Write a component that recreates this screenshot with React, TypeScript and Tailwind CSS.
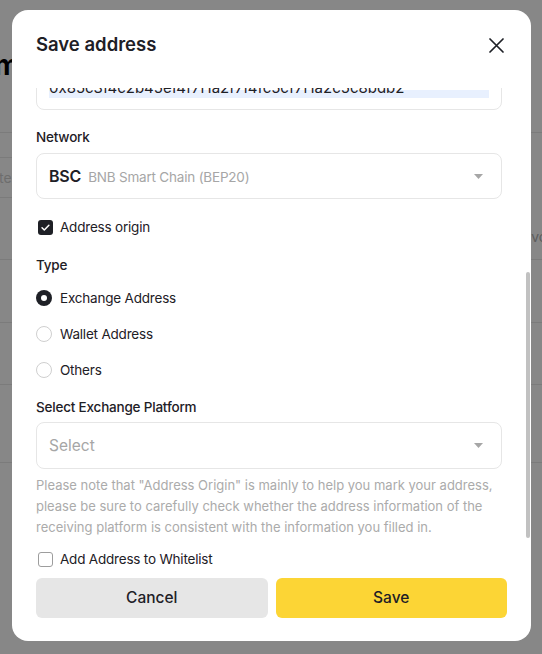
import { useLayoutEffect, useRef } from "react";

function CheckBox({ checked }: { checked: boolean }) {
  if (checked) {
    return (
      <span className="ml-[2px] flex h-[15px] w-[15px] items-center justify-center rounded-[3px] bg-[#1e2026]">
        <svg width="11" height="11" viewBox="0 0 12 12" fill="none">
          <path d="M2.2 6.2l2.5 2.5 5-5.2" stroke="#fff" strokeWidth="1.6" strokeLinecap="round" strokeLinejoin="round" />
        </svg>
      </span>
    );
  }
  return <span className="ml-[2px] h-[15px] w-[15px] rounded-[3px] border border-[#9d9d9d] bg-white" />;
}

function Radio({ label, checked }: { label: string; checked?: boolean }) {
  return (
    <div className="flex h-5 items-center gap-2">
      {checked ? (
        <span className="flex h-4 w-4 items-center justify-center rounded-full bg-[#1e2026]">
          <span className="h-[6px] w-[6px] rounded-full bg-white" />
        </span>
      ) : (
        <span className="h-4 w-4 rounded-full border border-[#cfcfcf] bg-white" />
      )}
      <span className="text-[13.5px] tracking-[-0.2px] text-[#1e2026]">{label}</span>
    </div>
  );
}

function Caret() {
  return (
    <svg width="9" height="5" viewBox="0 0 9 5" className="mr-[6px]">
      <path d="M0 0h9L4.5 5z" fill="#a6a6a6" />
    </svg>
  );
}

function SaveAddressModal() {
  const scrollRef = useRef<HTMLDivElement>(null);

  useLayoutEffect(() => {
    const el = scrollRef.current;
    if (el) el.scrollTop = el.scrollHeight - el.clientHeight;
  }, []);

  const label = "text-[13.5px] font-medium leading-5 tracking-[-0.2px] text-[#1e2026]";

  return (
    <div className="w-[519px] rounded-2xl bg-white px-6 pb-[23px] pt-[21px]">
      <div className="mb-[29px] flex h-7 items-center justify-between">
        <h2 className="text-[18.5px] font-semibold text-[#1e2026]">Save address</h2>
        <button className="mr-[1px] flex h-5 w-5 items-center justify-center">
          <svg width="15" height="15" viewBox="0 0 15 15" fill="none">
            <path d="M1 1l13 13M14 1L1 14" stroke="#1e2026" strokeWidth="1.7" strokeLinecap="round" />
          </svg>
        </button>
      </div>

      <div className="relative -mr-6">
        <div ref={scrollRef} className="h-[452px] overflow-hidden pb-[2px] pr-[29px]">
          <div className={label}>Address</div>
          <div className="mt-[6px] rounded-lg border border-[#e6e6e6] px-3 pb-[11px] pt-3">
            <div className="h-5" />
            <div className="relative h-2 bg-[#e8f0fe]">
              <div className="absolute -top-[2px] left-0 h-[5px] overflow-hidden">
                <span className="-mt-[8px] block whitespace-nowrap text-[15px] leading-none text-[#1e2026]">
                  0x85c3f4c2b45ef4f7f1a2f7f4fc5cf7f1a2c5c8bdb2
                </span>
              </div>
            </div>
          </div>

          <div className={`mt-[17px] ${label}`}>Network</div>
          <div className="mt-[6px] flex h-[46px] items-center justify-between rounded-lg border border-[#e6e6e6] px-3">
            <div className="flex items-baseline gap-[7px]">
              <span className="text-[16px] font-semibold tracking-[-0.2px] text-[#1e2026]">BSC</span>
              <span className="text-[13.5px] tracking-[-0.2px] text-[#a6a6a6]">BNB Smart Chain (BEP20)</span>
            </div>
            <Caret />
          </div>

          <div className="mt-[18px] flex h-5 items-center gap-[7px]">
            <CheckBox checked />
            <span className="text-[13.5px] tracking-[-0.2px] text-[#1e2026]">Address origin</span>
          </div>

          <div className={`mt-[18px] ${label}`}>Type</div>
          <div className="mt-[13px] flex flex-col gap-4">
            <Radio label="Exchange Address" checked />
            <Radio label="Wallet Address" />
            <Radio label="Others" />
          </div>

          <div className={`mt-[17px] ${label}`}>Select Exchange Platform</div>
          <div className="mt-[5px] flex h-[47px] items-center justify-between rounded-lg border border-[#e6e6e6] px-3">
            <span className="text-[15.5px] text-[#a6a6a6]">Select</span>
            <Caret />
          </div>

          <p className="mt-[6px] text-[13px] leading-[21px] text-[#ababab]">
            Please note that "Address Origin" is mainly to help you mark your address, please be sure to carefully
            check whether the address information of the receiving platform is consistent with the information you
            filled in.
          </p>
        </div>
        <div className="absolute right-[1px] top-[184px] h-[266px] w-[4px] rounded-full bg-[#c1c1c1]" />
      </div>

      <div className="mt-[9px] flex h-5 items-center gap-[7px]">
        <CheckBox checked={false} />
        <span className="text-[13.5px] tracking-[-0.2px] text-[#1e2026]">Add Address to Whitelist</span>
      </div>

      <div className="mt-[9px] grid grid-cols-2 gap-2">
        <button className="h-10 rounded-md bg-[#e6e6e6] text-[15.5px] font-medium text-[#1e2026]">Cancel</button>
        <button className="h-10 rounded-md bg-[#fcd535] text-[15.5px] font-medium text-[#1e2026]">Save</button>
      </div>
    </div>
  );
}

export default function App() {
  return (
    <div className="relative h-[654px] w-[542px] overflow-hidden bg-white font-['Inter',sans-serif]">
      {/* page behind the dialog */}
      <div className="pt-[47px]">
        <h1 className="-ml-[6px] h-9 whitespace-nowrap text-[28px] font-bold leading-9 text-black">my Addresses</h1>
        <div className="h-[50px] border-b border-[#e8e8e8]" />
        <div className="mt-6 flex h-[41px] w-[300px] items-center border-y border-[#e8e8e8] text-[14px] text-[#cfcfcf]">
          <span className="-ml-[1px]">te</span>
        </div>
        <div className="flex h-[62px] items-center justify-end border-b border-[#e8e8e8] pt-4 text-[14px] text-[#b0b0b0]">
          <span className="-mr-[34px] whitespace-nowrap">Favorites</span>
        </div>
        <div className="h-[63px] border-b border-[#e8e8e8]" />
        <div className="h-[62px] border-b border-[#e8e8e8]" />
        <div className="h-[78px] border-b border-[#e8e8e8]" />
      </div>

      <div className="absolute inset-0 bg-black/[0.47] pl-3 pt-[10px]">
        <SaveAddressModal />
      </div>
    </div>
  );
}
